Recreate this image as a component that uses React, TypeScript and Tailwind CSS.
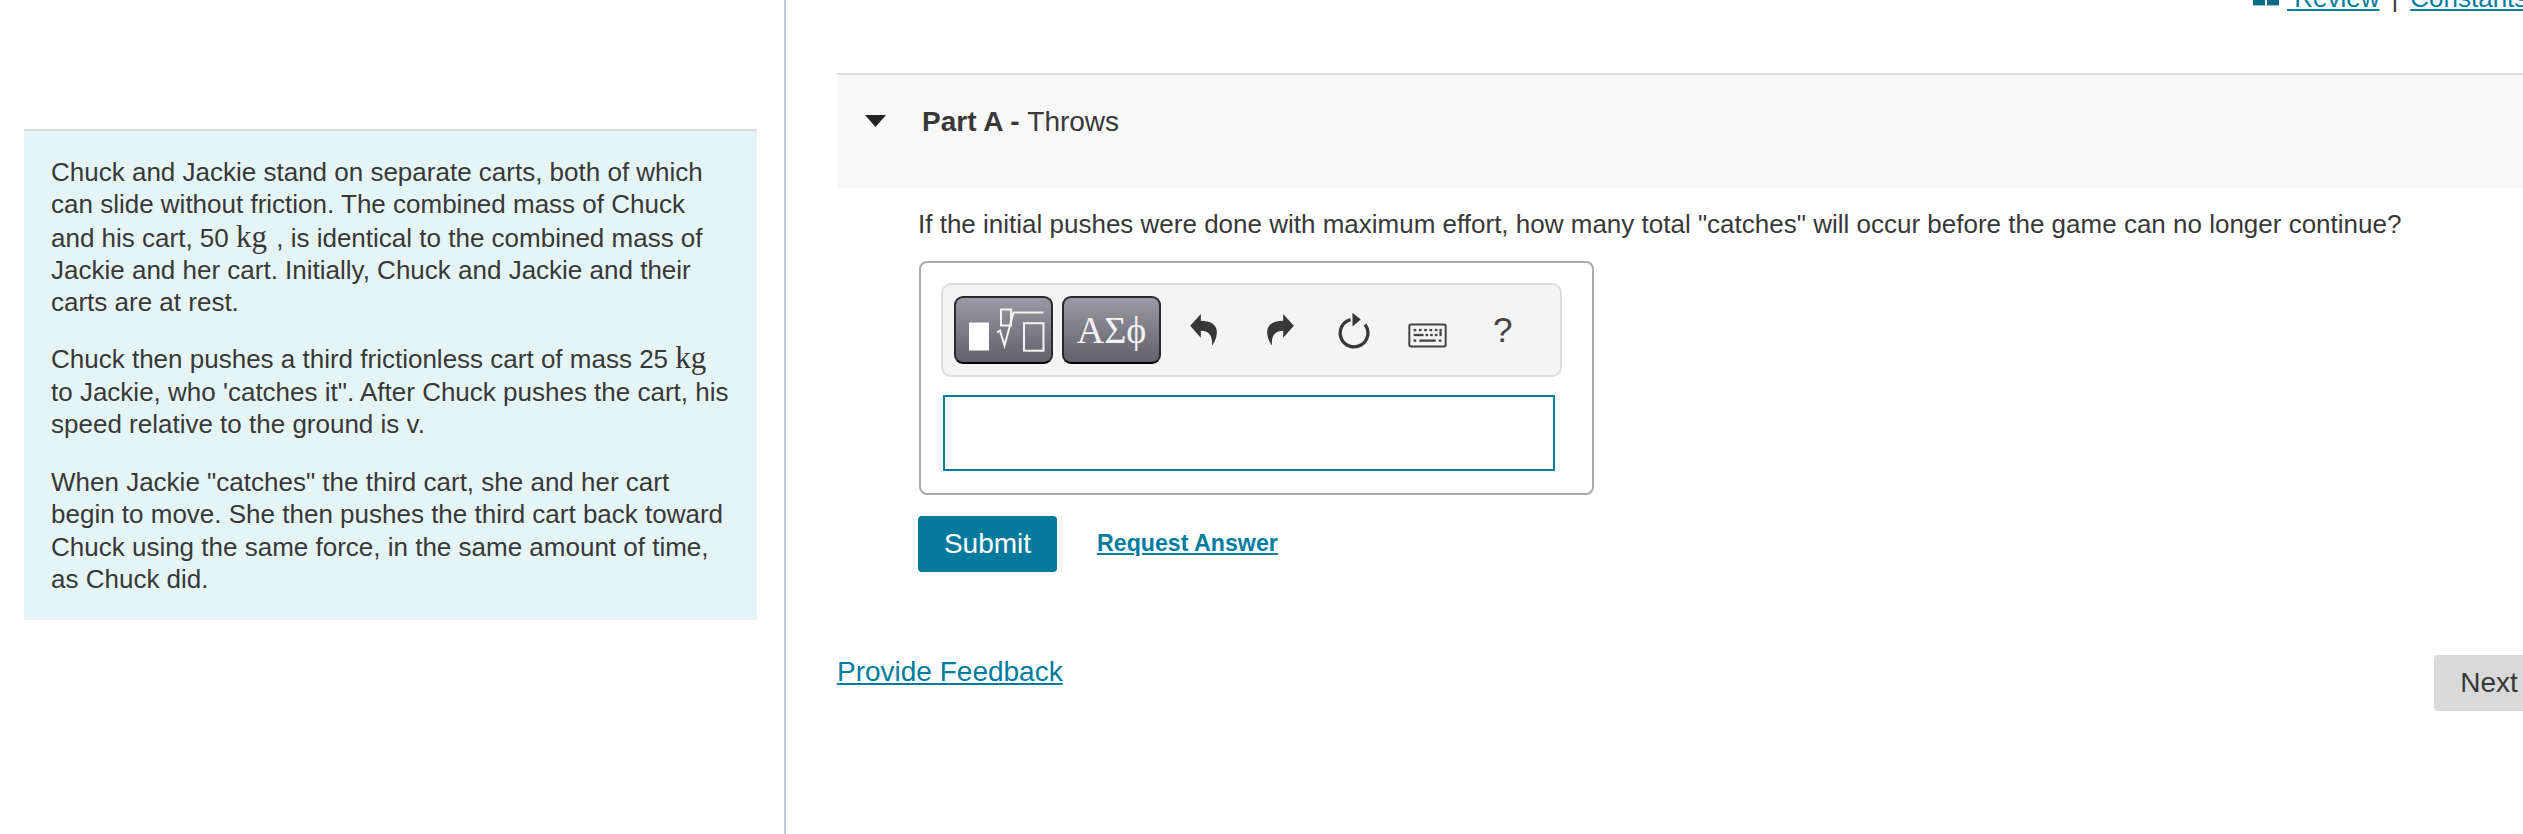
const Kg = () => <span className="mr-[2px] font-['Liberation_Serif',serif] text-[31px]">kg</span>;

const UndoIcon = ({ flip = false }: { flip?: boolean }) => (
  <svg width="27" height="32" viewBox="60 72 80 96" className={flip ? "-scale-x-100" : ""}>
    <path d="M60 107 L92 72 L92 92 C122 92 142 104 140 130 C139 146 132 158 125 167 C129 140 118 122 92 122 L92 143 Z" fill="#383838" />
  </svg>
);

const ResetIcon = () => (
  <svg width="33" height="37" viewBox="500 64 100 112">
    <path d="M541 87 A42 42 0 1 0 585 102" fill="none" stroke="#383838" strokeWidth="10" />
    <path d="M547 66 L572 87 L547 108 Z" fill="#383838" />
  </svg>
);

const KeyboardIcon = () => (
  <svg width="39" height="25" viewBox="712 98 118 74">
    <rect x="716" y="102" width="110" height="66" rx="5" fill="none" stroke="#444" strokeWidth="6" />
    <g fill="#444">
      <rect x="729" y="115" width="8" height="7" />
      <rect x="745" y="115" width="8" height="7" />
      <rect x="761" y="115" width="8" height="7" />
      <rect x="777" y="115" width="8" height="7" />
      <rect x="793" y="115" width="8" height="7" />
      <rect x="807" y="115" width="7" height="7" />
      <rect x="729" y="130" width="30" height="7" />
      <rect x="765" y="130" width="8" height="7" />
      <rect x="779" y="130" width="8" height="7" />
      <rect x="793" y="130" width="8" height="7" />
      <rect x="807" y="122" width="7" height="15" />
      <rect x="729" y="147" width="8" height="7" />
      <rect x="746" y="147" width="50" height="7" />
      <rect x="805" y="147" width="8" height="7" />
    </g>
  </svg>
);

const TemplateIcon = () => (
  <svg viewBox="2 2 95 63" className="h-full w-full">
    <rect x="15" y="26" width="20" height="28" fill="#fff" />
    <g fill="none" stroke="#f4f4f4" strokeWidth="2">
      <rect x="47" y="13" width="10" height="16" />
      <path d="M43 36 L46 34 L50.5 49 L59.5 16 L89.5 16" />
      <rect x="70" y="26.7" width="19.5" height="27.5" />
    </g>
  </svg>
);

const BookIcon = () => (
  <svg width="26" height="6" viewBox="0 0 26 6">
    <rect x="0" y="0" width="12" height="5" fill="#0b6c86" />
    <rect x="14" y="0" width="12" height="5" fill="#0b6c86" />
    <rect x="0" y="5" width="26" height="1" fill="#9cc4d0" />
  </svg>
);

export default function App() {
  return (
    <div className="flex h-[834px] w-[2523px] overflow-hidden bg-white font-['Liberation_Sans',sans-serif] text-[26px] leading-[32.25px] text-[#383838]">
      <aside className="h-full w-[786px] shrink-0 border-r-2 border-[#bccbe0] pt-[129px] pl-6 pr-[27px]">
        <div className="border-t-2 border-[#dddddd] bg-[#e5f5f6] pt-[25px] pr-[27px] pb-[25px] pl-[27px]">
          <p>
            Chuck and Jackie stand on separate carts, both of which can slide without friction. The combined mass of Chuck and his cart, 50 <Kg /> , is identical to the combined mass of Jackie and her cart. Initially, Chuck and Jackie and their carts are at rest.
          </p>
          <p className="mt-6">
            Chuck then pushes a third frictionless cart of mass 25 <Kg /> to Jackie, who 'catches it". After Chuck pushes the cart, his speed relative to the ground is v.
          </p>
          <p className="mt-[26px]">
            When Jackie "catches" the third cart, she and her cart begin to move. She then pushes the third cart back toward Chuck using the same force, in the same amount of time, as Chuck did.
          </p>
        </div>
      </aside>

      <main className="min-w-0 flex-1 pl-[51px]">
        <div className="-mt-[18px] ml-[1416px] flex h-[32px] items-end whitespace-nowrap">
          <span className="mb-[8px]"><BookIcon /></span>
          <a className="ml-[8px] text-[#007c9e] underline">{"\u00a0"}Review</a>
          <span className="mx-[12px]">|</span>
          <a className="text-[#007c9e] underline">Constants</a>
        </div>

        <div className="mt-[59px] flex h-[115px] items-start border-t-2 border-[#dddddd] bg-[#f8f8f8] pt-[31px]">
          <svg width="21" height="12" viewBox="0 0 21 12" className="mt-[9px] ml-[28px]">
            <path d="M0 0 H21 L10.5 12 Z" fill="#222" />
          </svg>
          <h2 className="ml-[36px] text-[28px]">
            <b>Part A - </b>Throws
          </h2>
        </div>

        <div className="pl-[81px]">
          <p className="mt-[20px]">
            If the initial pushes were done with maximum effort, how many total "catches" will occur before the game can no longer continue?
          </p>

          <div className="mt-[21px] ml-[1px] h-[234px] w-[675px] rounded-lg border-2 border-[#aaaaaa] pt-[20px] pl-[20px]">
            <div className="flex h-[94px] w-[621px] items-center rounded-[10px] border-2 border-[#dddddd] bg-[#f4f4f4] pl-[11px]">
              <button className="h-[68px] w-[99px] rounded-[9px] border-2 border-[#2a2a2a] border-b-black bg-gradient-to-b from-[#9b99a5] to-[#62626a]">
                <TemplateIcon />
              </button>
              <button className="ml-[9px] h-[68px] w-[99px] rounded-[9px] border-2 border-[#2a2a2a] border-b-black bg-gradient-to-b from-[#9b99a5] to-[#62626a] font-['Liberation_Serif',serif] text-[38px] text-[#f2f2f2]">
                ΑΣϕ
              </button>
              <span className="ml-[29px]"><UndoIcon /></span>
              <span className="ml-[50px]"><UndoIcon flip /></span>
              <span className="ml-[43px]"><ResetIcon /></span>
              <span className="ml-[38px] mt-[10px]"><KeyboardIcon /></span>
              <span className="ml-[46px] text-[35px] text-[#444]">?</span>
            </div>
            <div className="mt-[18px] ml-[2px] h-[76px] w-[612px] border-2 border-[#007c9e] bg-white" />
          </div>

          <div className="mt-[21px] flex items-center">
            <button className="h-[56px] w-[139px] rounded bg-[#057a9d] text-[28px] text-white">Submit</button>
            <a className="ml-[40px] mb-[2px] text-[23.2px] font-bold text-[#007c9e] underline">Request Answer</a>
          </div>
        </div>

        <div className="mt-[84px] flex items-start justify-between">
          <a className="text-[28px] text-[#007c9e] underline">Provide Feedback</a>
          <button className="-mt-[1px] mr-[-21px] h-[56px] w-[110px] shrink-0 rounded bg-[#d9d9d9] text-[28px]">Next</button>
        </div>
      </main>
    </div>
  );
}
